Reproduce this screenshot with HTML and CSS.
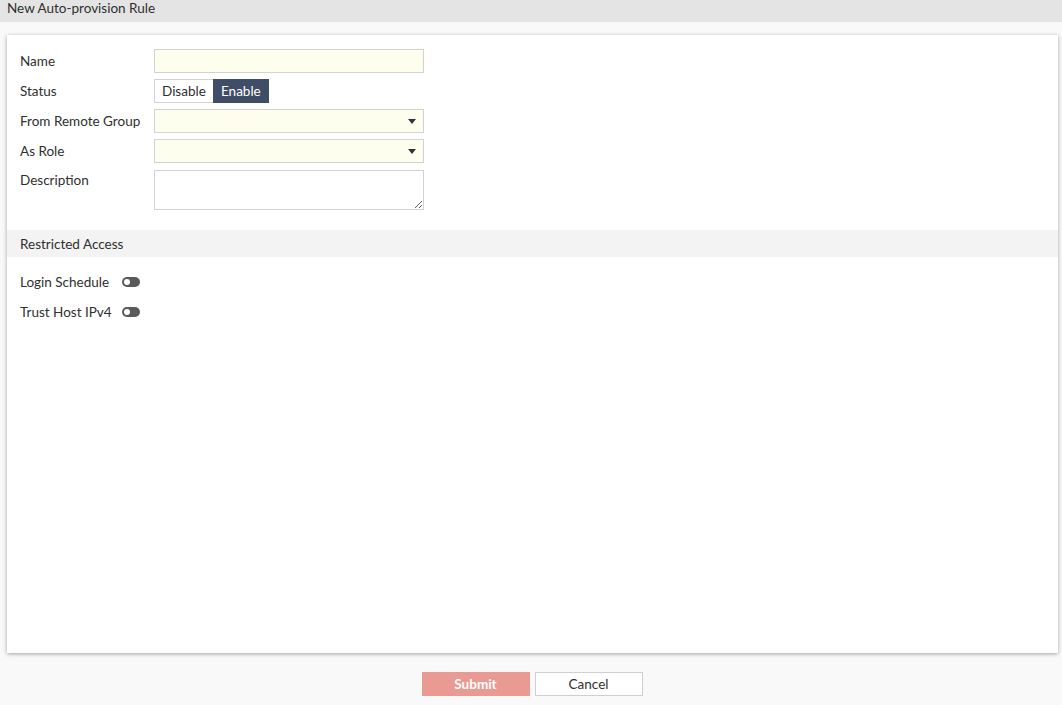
FILE: index.html
```html
<!DOCTYPE html>
<html>
<head>
<meta charset="utf-8">
<link rel="stylesheet" href="styles.css">
</head>
<body>
<div class="page">
  <div class="titlebar">New Auto-provision Rule</div>
  <div class="main">
    <div class="card">
      <div class="form">
        <div class="row">
          <label class="lbl">Name</label>
          <input class="field" type="text">
        </div>
        <div class="row">
          <label class="lbl">Status</label>
          <div class="seg">
            <span class="seg-btn">Disable</span>
            <span class="seg-btn active">Enable</span>
          </div>
        </div>
        <div class="row">
          <label class="lbl">From Remote Group</label>
          <div class="field select"><span class="caret"></span></div>
        </div>
        <div class="row">
          <label class="lbl">As Role</label>
          <div class="field select"><span class="caret"></span></div>
        </div>
        <div class="row row-top">
          <label class="lbl">Description</label>
          <textarea class="area"></textarea>
        </div>
      </div>
      <div class="section">Restricted Access</div>
      <div class="toggles">
        <div class="trow">
          <span class="tlbl">Login Schedule</span>
          <span class="toggle"><span class="knob"></span></span>
        </div>
        <div class="trow">
          <span class="tlbl">Trust Host IPv4</span>
          <span class="toggle"><span class="knob"></span></span>
        </div>
      </div>
    </div>
  </div>
  <div class="footer">
    <button class="btn submit">Submit</button>
    <button class="btn cancel">Cancel</button>
  </div>
</div>
</body>
</html>
```
FILE: styles.css
```css
* { box-sizing: border-box; }
html, body { margin: 0; padding: 0; }
body {
  font-family: Lato, "Open Sans", "Liberation Sans", sans-serif;
  font-size: 13.5px;
  color: #2f2f2f;
  background: #f9f9f9;
}
.page {
  display: flex;
  flex-direction: column;
  height: 705px;
}
.titlebar {
  height: 22px;
  background: #e4e4e4;
  padding-left: 7px;
  line-height: 17px;
  color: #2f2f2f;
}
.main {
  flex: 1;
  padding: 13px 4px 0 7px;
  display: flex;
}
.card {
  flex: 1;
  background: #fff;
  box-shadow: 0 1px 4px rgba(0,0,0,0.35);
  display: flex;
  flex-direction: column;
}
.form {
  padding: 14px 13px 0 13px;
  display: flex;
  flex-direction: column;
  gap: 6px;
}
.row {
  display: flex;
  align-items: center;
  height: 24px;
}
.row-top {
  align-items: flex-start;
  height: 40px;
  margin-top: 1px;
}
.lbl {
  width: 134px;
  flex: none;
}
.row-top .lbl { padding-top: 2px; }
.field {
  width: 270px;
  height: 24px;
  border: 1px solid #d2d2d2;
  background: #fefeee;
  margin: 0;
  padding: 0 6px;
  font: inherit;
  outline: none;
}
.select {
  display: flex;
  align-items: center;
  justify-content: flex-end;
  padding-right: 7px;
}
.caret {
  width: 0;
  height: 0;
  border-left: 4.5px solid transparent;
  border-right: 4.5px solid transparent;
  border-top: 5px solid #333;
}
.seg {
  display: flex;
  height: 24px;
}
.seg-btn {
  display: flex;
  align-items: center;
  padding: 0 7px;
  border: 1px solid #d2d2d2;
  background: #fff;
  color: #2f2f2f;
}
.seg-btn:first-child { width: 59px; border-right: none; }
.seg-btn.active {
  width: 56px;
  background: #3f4d66;
  border-color: #3f4d66;
  color: #fff;
}
.area {
  width: 270px;
  height: 40px;
  border: 1px solid #d2d2d2;
  background: #fff;
  margin: 0;
  padding: 3px 6px;
  font: inherit;
  resize: both;
  outline: none;
}
.section {
  margin-top: 20px;
  height: 27px;
  background: #f3f3f3;
  padding-left: 13px;
  line-height: 28px;
}
.toggles {
  padding: 15px 13px 0 13px;
  display: flex;
  flex-direction: column;
  gap: 10px;
}
.trow {
  display: flex;
  align-items: center;
  height: 20px;
}
.tlbl { width: 102px; flex: none; }
.toggle {
  width: 18px;
  height: 10px;
  border-radius: 5px;
  background: #5a5a5a;
  position: relative;
}
.knob {
  position: absolute;
  left: 2px;
  top: 2px;
  width: 6px;
  height: 6px;
  border-radius: 50%;
  background: #fff;
}
.footer {
  height: 52px;
  flex: none;
  padding-top: 19px;
  display: flex;
  justify-content: center;
  align-items: flex-start;
  gap: 5px;
}
.btn {
  width: 108px;
  height: 24px;
  font: inherit;
  margin: 0;
  padding: 0;
}
.submit {
  background: #e99a93;
  border: 1px solid #e99a93;
  color: #fff;
  font-weight: bold;
  margin-left: 2px;
}
.cancel {
  background: #fff;
  border: 1px solid #cfcfcf;
  color: #2f2f2f;
}
```
